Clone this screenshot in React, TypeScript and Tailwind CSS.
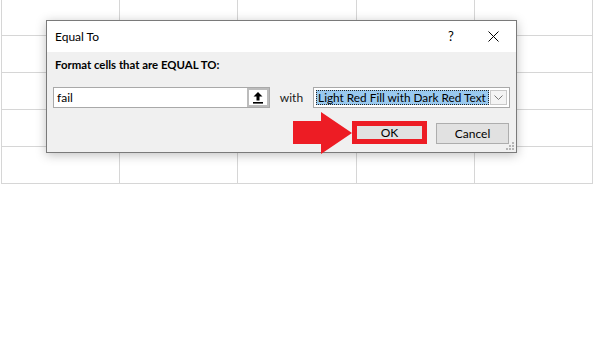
import React from "react";

const cols = [0, 1, 2, 3, 4];
const rows = [0, 1, 2, 3, 4];

function Sheet() {
  return (
    <div className="ml-[1px] flex w-[592px] flex-col border-l border-[#d6d6d6]">
      {rows.map((r) => (
        <div key={r} className="flex">
          {cols.map((c) => (
            <div
              key={c}
              className={`${c === 2 ? "w-[119px]" : "w-[118px]"} ${r === 0 ? "h-[36px]" : "h-[37px]"} border-b border-r border-[#d6d6d6]`}
            />
          ))}
        </div>
      ))}
    </div>
  );
}

function UploadIcon() {
  return (
    <svg width="12" height="13" viewBox="0 0 12 13">
      <path d="M6 1 L1.5 5.5 H4.5 V9.5 H7.5 V5.5 H10.5 Z" fill="#000" />
      <rect x="1" y="11" width="10" height="1.6" fill="#000" />
    </svg>
  );
}

function Grip() {
  const dots = [
    [6, 0],
    [3, 3],
    [6, 3],
    [0, 6],
    [3, 6],
    [6, 6],
  ];
  return (
    <svg width="8" height="8" className="absolute bottom-[2px] right-[2px]">
      {dots.map(([x, y], i) => (
        <rect key={i} x={x} y={y} width="2" height="2" fill="#b5b5b5" />
      ))}
    </svg>
  );
}

export default function App() {
  return (
    <div className="relative h-[338px] w-[594px] overflow-hidden bg-white font-['Lato','Liberation_Sans',Arial,sans-serif] text-[12px] text-black">
      <Sheet />

      <div className="absolute left-[46px] top-[20px] flex h-[133px] w-[471px] flex-col border border-[#7a7a7a] bg-[#f0f0f0] shadow-[0_2px_10px_rgba(0,0,0,0.25)]">
        <div className="flex h-[31px] items-center bg-white pl-[8px]">
          <span className="flex-1 text-[12px]">Equal To</span>
          <span className="w-[20px] text-center text-[13px]">?</span>
          <span className="ml-[25px] mr-[16px] flex w-[14px] justify-center">
            <svg width="11" height="11" viewBox="0 0 11 11">
              <path d="M0.5 0.5 L10.5 10.5 M10.5 0.5 L0.5 10.5" stroke="#000" strokeWidth="1" />
            </svg>
          </span>
        </div>

        <div className="flex flex-1 flex-col px-[6px]">
          <div className="mt-[5px] pl-[2px] text-[11.4px] font-bold leading-[15px]">Format cells that are EQUAL TO:</div>

          <div className="mt-[15px] flex items-center">
            <div className="flex h-[21px] w-[218px] border border-[#a9a9a9] bg-white">
              <div className="flex flex-1 items-center pl-[3px] text-[12px]">fail</div>
              <div className="flex w-[22px] items-center justify-center border-2 border-[#bcbcbc] bg-white">
                <UploadIcon />
              </div>
            </div>
            <span className="ml-[10px] text-[12px] text-[#1a1a1a]">with</span>
            <div className="ml-[10px] flex h-[21px] w-[198px] items-center border border-[#a9a9a9] bg-white p-[2px]">
              <div className="flex h-full flex-1 items-center whitespace-nowrap border border-dotted border-[#222] bg-[#99c9ef] pl-[1px] text-[11.8px]">
                Light Red Fill with Dark Red Text
              </div>
              <div className="ml-[1px] flex h-full w-[17px] items-center justify-center border border-[#c8c8c8] bg-[#f4f4f4]">
                <svg width="9" height="5" viewBox="0 0 9 5">
                  <path d="M0.5 0.5 L4.5 4.5 L8.5 0.5" stroke="#777" fill="none" strokeWidth="1" />
                </svg>
              </div>
            </div>
          </div>

          <div className="mt-[13px] flex justify-end pr-[1px]">
            <div className="flex h-[23px] w-[75px] items-center justify-center border-[5px] border-[#ed1c24] bg-[#e1e1e1] text-[12px]">
              OK
            </div>
            <div className="ml-[9px] mt-[2px] flex h-[21px] w-[73px] items-center justify-center border border-[#adadad] bg-[#e1e1e1] text-[12px]">
              Cancel
            </div>
          </div>
        </div>
        <Grip />
      </div>

      <svg className="absolute left-[292px] top-[111px]" width="62" height="44" viewBox="0 0 62 44">
        <polygon points="1,10 29,10 29,1 60,22 29,43 29,33 1,33" fill="#ed1c24" />
      </svg>
    </div>
  );
}
